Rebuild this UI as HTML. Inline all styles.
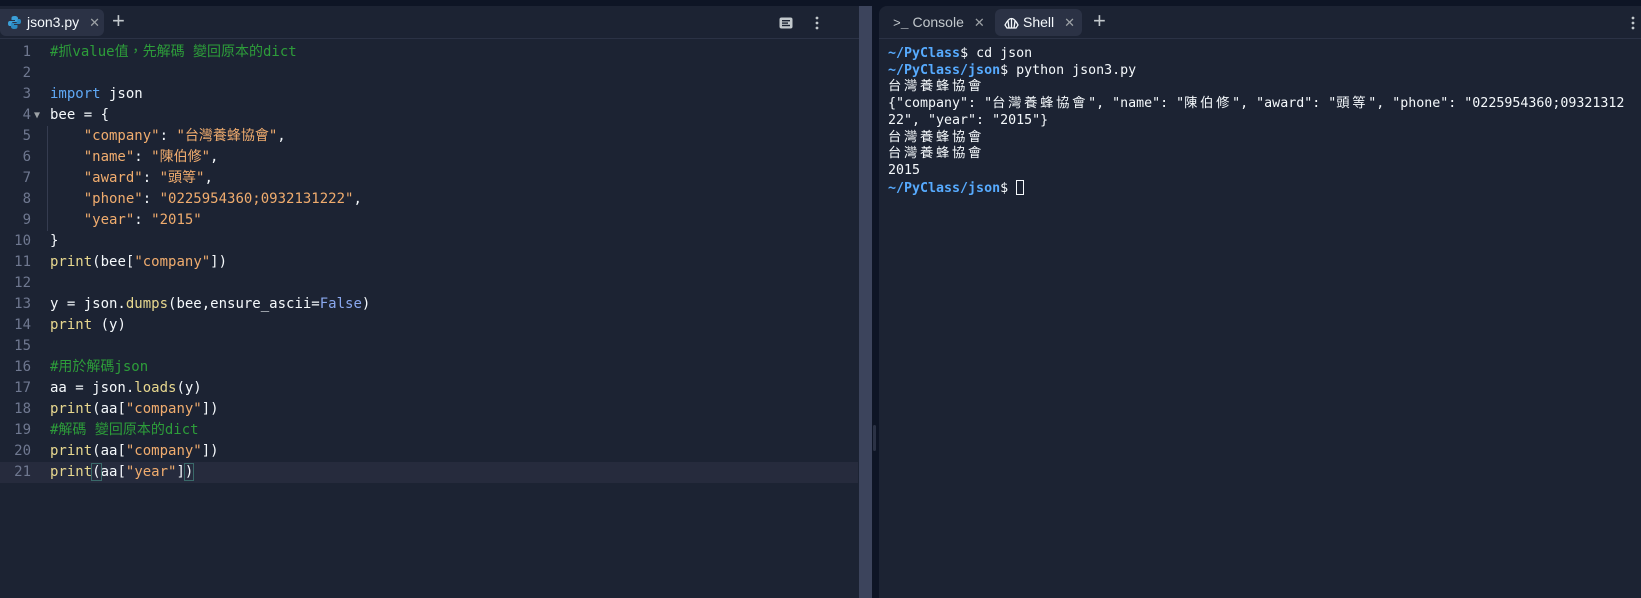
<!DOCTYPE html>
<html><head><meta charset="utf-8"><style>
*{margin:0;padding:0;box-sizing:border-box}
body{width:1641px;height:598px;background:#0e1525;overflow:hidden;position:relative;font-family:"Liberation Sans","Noto Sans CJK TC",sans-serif;color:#f5f9fc}
.pane{position:absolute;top:6px;bottom:0;background:#1c2333}
#ed{left:0;width:872px;border-top-right-radius:8px}
#tm{left:879px;right:0;border-top-left-radius:8px}
.hdr{position:absolute;left:0;right:0;top:0;height:33px;border-bottom:1px solid #2b3245}
.tab{position:absolute;top:3px;height:27px;border-radius:6px;font-size:14px;line-height:27px;color:#f5f9fc}
.tab.act{background:#2b3245}
.x{color:#9da2a6;font-size:13px;margin-left:10px}
.plus{position:absolute;top:2px;font-size:22px;color:#c2c8cc;font-weight:300}
.code{position:absolute;left:0;top:36px;font-family:"DejaVu Sans Mono","Noto Sans CJK TC",monospace;font-size:14px}
.ln{position:absolute;left:0;width:31px;text-align:right;color:#6f7890;height:21px;line-height:21px}
.cl{position:absolute;left:50px;height:21px;line-height:21px;white-space:pre;color:#f5f9fc}
.cm{color:#2d9d3a}.kw{color:#5fa8f5}.st{color:#f0ac6e}.fn{color:#e8d88f}.bo{color:#8aa8ef}
.term{position:absolute;left:9px;top:40px;font-family:"DejaVu Sans Mono","Noto Sans CJK TC",monospace;font-size:13.3px;line-height:16.7px;white-space:pre;color:#f5f9fc}
.p{color:#57abff;font-weight:bold}
.w{display:inline-block;width:2ch;text-align:left}
</style></head><body>
<div class="pane" id="ed">
 <div class="hdr">
  <div class="tab act" style="left:0;width:104px;padding-left:27px;border-top-left-radius:0">
   <svg style="position:absolute;left:7px;top:6px" width="15" height="15" viewBox="0 0 15 15"><path d="M7.5 1C4.5 1 4.5 2.5 4.5 3.5V5H8V6H3C1.5 6 1 7 1 8.5S1.5 11 3 11H4.5V9C4.5 8 5.5 7 6.5 7H9.5C10.5 7 11 6.5 11 5.5V3.5C11 2 10 1 7.5 1Z" fill="#3b9fd8"/><path d="M7.5 14C10.5 14 10.5 12.5 10.5 11.5V10H7V9H12C13.5 9 14 8 14 6.5S13.5 4 12 4H10.5V6C10.5 7 9.5 8 8.5 8H5.5C4.5 8 4 8.5 4 9.5V11.5C4 13 5 14 7.5 14Z" fill="#2c8ac0"/></svg>
   json3.py<span class="x">✕</span></div>
  <div class="plus" style="left:112px">+</div>
  <svg style="position:absolute;left:779px;top:11px" width="14" height="12" viewBox="0 0 14 12"><rect x="0.5" y="0.5" width="13" height="11" rx="2" fill="#c2c8cc"/><rect x="3" y="3" width="8" height="1.4" fill="#1c2333"/><rect x="3" y="5.4" width="6" height="1.4" fill="#1c2333"/><rect x="3" y="7.8" width="8" height="1.4" fill="#1c2333"/></svg>
  <svg style="position:absolute;left:815px;top:10px" width="4" height="14"><circle cx="2" cy="2" r="1.4" fill="#c2c8cc"/><circle cx="2" cy="7" r="1.4" fill="#c2c8cc"/><circle cx="2" cy="12" r="1.4" fill="#c2c8cc"/></svg>
 </div>
 <div style="position:absolute;left:0;width:858px;top:456px;height:21px;background:#262b3d"></div>
 <div style="position:absolute;left:47px;top:120px;width:1px;height:105px;background:#353c50"></div>
 <div class="code">
  <div class="ln" style="top:0">1</div><div class="cl cm" style="top:0">#抓value值，先解碼 變回原本的dict</div>
  <div class="ln" style="top:21px">2</div>
  <div class="ln" style="top:42px">3</div><div class="cl" style="top:42px"><span class="kw">import</span> json</div>
  <div class="ln" style="top:63px">4<span style="font-size:10px;color:#9da2a6;margin-left:2px;position:absolute;left:32px">▼</span></div><div class="cl" style="top:63px">bee = {</div>
  <div class="ln" style="top:84px">5</div><div class="cl" style="top:84px">    <span class="st">"company"</span>: <span class="st">"台灣養蜂協會"</span>,</div>
  <div class="ln" style="top:105px">6</div><div class="cl" style="top:105px">    <span class="st">"name"</span>: <span class="st">"陳伯修"</span>,</div>
  <div class="ln" style="top:126px">7</div><div class="cl" style="top:126px">    <span class="st">"award"</span>: <span class="st">"頭等"</span>,</div>
  <div class="ln" style="top:147px">8</div><div class="cl" style="top:147px">    <span class="st">"phone"</span>: <span class="st">"0225954360;0932131222"</span>,</div>
  <div class="ln" style="top:168px">9</div><div class="cl" style="top:168px">    <span class="st">"year"</span>: <span class="st">"2015"</span></div>
  <div class="ln" style="top:189px">10</div><div class="cl" style="top:189px">}</div>
  <div class="ln" style="top:210px">11</div><div class="cl" style="top:210px"><span class="fn">print</span>(bee[<span class="st">"company"</span>])</div>
  <div class="ln" style="top:231px">12</div>
  <div class="ln" style="top:252px">13</div><div class="cl" style="top:252px">y = json.<span class="fn">dumps</span>(bee,ensure_ascii=<span class="bo">False</span>)</div>
  <div class="ln" style="top:273px">14</div><div class="cl" style="top:273px"><span class="fn">print</span> (y)</div>
  <div class="ln" style="top:294px">15</div>
  <div class="ln" style="top:315px">16</div><div class="cl cm" style="top:315px">#用於解碼json</div>
  <div class="ln" style="top:336px">17</div><div class="cl" style="top:336px">aa = json.<span class="fn">loads</span>(y)</div>
  <div class="ln" style="top:357px">18</div><div class="cl" style="top:357px"><span class="fn">print</span>(aa[<span class="st">"company"</span>])</div>
  <div class="ln" style="top:378px">19</div><div class="cl cm" style="top:378px">#解碼 變回原本的dict</div>
  <div class="ln" style="top:399px">20</div><div class="cl" style="top:399px"><span class="fn">print</span>(aa[<span class="st">"company"</span>])</div>
  <div class="ln" style="top:420px">21</div><div class="cl" style="top:420px"><span class="fn">print</span><span style="outline:1px solid #3a6a6a">(</span>aa[<span class="st">"year"</span>]<span style="outline:1px solid #3a6a6a">)</span></div>
 </div>
 <div style="position:absolute;left:859px;top:0;width:13px;bottom:0;background:#3c445c"></div>
</div>
<div style="position:absolute;left:873px;top:425px;width:3px;height:26px;border-radius:2px;background:#2b3245"></div>
<div class="pane" id="tm">
 <div class="hdr">
  <div class="tab" style="left:3px;width:105px;padding-left:11px;color:#c2c8cc"><span style="font-family:'Liberation Mono';font-size:13px">&gt;_</span> Console<span class="x">✕</span></div>
  <div class="tab act" style="left:116px;width:87px;padding-left:28px">
   <svg style="position:absolute;left:9px;top:7px" width="15" height="14" viewBox="0 0 15 14" fill="none" stroke="#f5f9fc" stroke-width="1.3"><path d="M1 9 Q7.5 -4 14 9 L12 12 H3 Z"/><path d="M7.5 12 V3 M5 12 L4 5 M10 12 L11 5"/></svg>
   Shell<span class="x">✕</span></div>
  <div class="plus" style="left:214px">+</div>
  <svg style="position:absolute;left:752px;top:10px" width="4" height="14"><circle cx="2" cy="2" r="1.4" fill="#c2c8cc"/><circle cx="2" cy="7" r="1.4" fill="#c2c8cc"/><circle cx="2" cy="12" r="1.4" fill="#c2c8cc"/></svg>
 </div>
<div class="term"><span class="p">~/PyClass</span>$ cd json
<span class="p">~/PyClass/json</span>$ python json3.py
<span class="w">台</span><span class="w">灣</span><span class="w">養</span><span class="w">蜂</span><span class="w">協</span><span class="w">會</span>
{"company": "<span class="w">台</span><span class="w">灣</span><span class="w">養</span><span class="w">蜂</span><span class="w">協</span><span class="w">會</span>", "name": "<span class="w">陳</span><span class="w">伯</span><span class="w">修</span>", "award": "<span class="w">頭</span><span class="w">等</span>", "phone": "0225954360;09321312
22", "year": "2015"}
<span class="w">台</span><span class="w">灣</span><span class="w">養</span><span class="w">蜂</span><span class="w">協</span><span class="w">會</span>
<span class="w">台</span><span class="w">灣</span><span class="w">養</span><span class="w">蜂</span><span class="w">協</span><span class="w">會</span>
2015
<span class="p">~/PyClass/json</span>$ <span style="display:inline-block;width:8px;height:15px;border:1px solid #f5f9fc;vertical-align:-3px"></span></div>
</div>
</body></html>
